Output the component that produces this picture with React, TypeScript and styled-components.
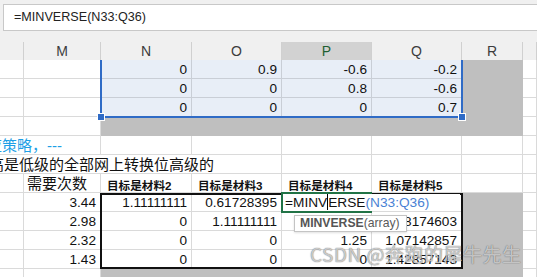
import React from 'react';
import styled, { createGlobalStyle, css } from 'styled-components';

const GlobalStyle = createGlobalStyle`
  html, body {
    margin: 0;
    padding: 0;
    background: #fff;
  }
  body {
    font-family: "Liberation Sans", "Noto Sans CJK SC", sans-serif;
  }
`;

const COLS = [24, 77, 91, 90, 90, 90, 61, 14];
const LETTERS = ['', 'M', 'N', 'O', 'P', 'Q', 'R', ''];
const colTemplate = COLS.map(c => c + 'px').join(' ');

type Fill = 'sel' | 'grey';
type Kind = 'num' | 'note' | 'text' | 'label' | 'title';
type C = { v?: string; fill?: Fill; span?: number; kind?: Kind };

const e: C = {};
const s = (v: string): C => ({ v, fill: 'sel' });
const g: C = { fill: 'grey' };
const n = (v: string): C => ({ v });
const t = (v: string): C => ({ v, kind: 'title' });

const ROWS: C[][] = [
  [e, e, s('0'), s('0.9'), s('-0.6'), s('-0.2'), g, e],
  [e, e, s('0'), s('0'), s('0.8'), s('-0.6'), g, e],
  [e, e, s('0'), s('0'), s('0'), s('0.7'), g, e],
  [e, e, g, g, g, g, g, e],
  [{ v: '应策略，---', kind: 'note', span: 2 }, e, e, e, e, e, e],
  [{ v: '高是低级的全部网上转换位高级的', kind: 'text', span: 4 }, e, e, e, e],
  [e, { v: '需要次数', kind: 'label' }, t('目标是材料2'), t('目标是材料3'), t('目标是材料4'), t('目标是材料5'), e, e],
  [e, n('3.44'), n('1.11111111'), n('0.61728395'), e, e, g, e],
  [e, n('2.98'), n('0'), n('1.11111111'), n('0'), n('0.38174603'), g, e],
  [e, n('2.32'), n('0'), n('0'), n('1.25'), n('1.07142857'), g, e],
  [e, n('1.43'), n('0'), n('0'), n('0'), n('1.42857143'), g, e],
  [e, e, g, g, g, g, g, e],
];

const Window = styled.div`
  width: 537px;
  height: 277px;
  overflow: hidden;
  background: #f0f0f0;
  display: flex;
  flex-direction: column;
`;

const FormulaArea = styled.div`
  height: 42px;
  flex: none;
  box-sizing: border-box;
  padding: 4px 0 0 3px;
`;

const FormulaInput = styled.div`
  height: 27px;
  box-sizing: border-box;
  background: #fff;
  border: 1px solid #c8c8c8;
  border-right: none;
  padding-left: 10px;
  font-size: 12.6px;
  line-height: 25px;
  color: #222;
`;

const HeaderRow = styled.div`
  display: grid;
  grid-template-columns: ${colTemplate};
  height: 18px;
  flex: none;
`;

const ColHead = styled.div<{ $active?: boolean }>`
  box-sizing: border-box;
  border-right: 1px solid #d0d0d0;
  border-bottom: 1px solid #bdbdbd;
  text-align: center;
  font-size: 14px;
  line-height: 18px;
  color: #3c3c3c;
  ${p => p.$active && css`
    background: #d2d2d2;
    border-bottom: 2px solid #217346;
    color: #1f5f30;
  `}
`;

const Body = styled.div`
  position: relative;
  flex: none;
  background: #fff;
  display: grid;
  grid-template-columns: ${colTemplate};
  grid-auto-rows: 19px;
`;

const Cell = styled.div<{ $fill?: Fill; $span?: number; $kind?: Kind }>`
  box-sizing: border-box;
  grid-column: span ${p => p.$span || 1};
  border-right: 1px solid #dadada;
  border-bottom: 1px solid #dadada;
  overflow: hidden;
  white-space: nowrap;
  padding: 1px 4px 0 3px;
  font-size: 13.6px;
  line-height: 18px;
  text-align: right;
  color: #111;
  ${p => p.$fill === 'sel' && css`
    background: #e8eef7;
    border-color: #c9ced6;
  `}
  ${p => p.$fill === 'grey' && css`
    background: #bfbfbf;
    border-color: #bfbfbf;
  `}
  ${p => (p.$kind === 'note' || p.$kind === 'text') && css`
    text-align: left;
    padding: 0;
    font-size: 15px;
    line-height: 19px;
    text-indent: ${p.$kind === 'note' ? -13 : -11}px;
    color: ${p.$kind === 'note' ? '#1e9fe6' : '#111'};
  `}
  ${p => p.$kind === 'label' && css`
    text-align: left;
    padding: 1px 0 0 3px;
    font-size: 15px;
  `}
  ${p => p.$kind === 'title' && css`
    text-align: left;
    padding: 3px 0 0 6px;
    font-size: 11.6px;
    font-weight: 700;
  `}
`;

const RefRange = styled.div`
  position: absolute;
  left: 100px;
  top: 0;
  width: 363px;
  height: 58px;
  box-sizing: border-box;
  border: 2px solid #2f6bc6;
  border-top: none;
  pointer-events: none;
`;

const Handle = styled.div<{ $side: 'left' | 'right' }>`
  position: absolute;
  bottom: -5px;
  ${p => (p.$side === 'left' ? 'left: -5px;' : 'right: -5px;')}
  width: 6px;
  height: 6px;
  background: #2f6bc6;
  border: 1px solid #fff;
`;

const BlockBorder = styled.div`
  position: absolute;
  left: 100px;
  top: 133px;
  width: 363px;
  height: 76px;
  box-sizing: border-box;
  border: 2px solid #111;
  pointer-events: none;
`;

/* active cell P: green frame, the editor text spills out over Q */
const ActiveFrame = styled.div`
  position: absolute;
  left: 281px;
  top: 132px;
  width: 91px;
  height: 21px;
  box-sizing: border-box;
  border: 2px solid #217346;
`;

const EditorText = styled.div`
  width: 177px;
  height: 17px;
  background: #fff;
  font-size: 13.7px;
  line-height: 17px;
  padding-left: 2px;
  box-sizing: border-box;
  white-space: nowrap;
  color: #111;
`;

const RefText = styled.span`
  color: #4a82d4;
`;

const Caret = styled.span`
  display: inline-block;
  width: 0;
  height: 16px;
  border-left: 1px solid #000;
  vertical-align: -3px;
`;

const Tip = styled.div`
  position: absolute;
  left: 294px;
  top: 155px;
  width: 113px;
  height: 17px;
  box-sizing: border-box;
  background: #fff;
  border: 1px solid #c4c4c4;
  box-shadow: 0 1px 2px rgba(0, 0, 0, 0.12);
  padding-left: 5px;
  font-size: 12.2px;
  line-height: 15px;
  color: #5a5a5a;
  white-space: nowrap;
`;

const TipName = styled.b`
  color: #555;
`;

const Watermark = styled.div`
  position: absolute;
  left: 310px;
  top: 180px;
  font-family: "Noto Sans CJK SC", sans-serif;
  font-size: 19px;
  letter-spacing: 0.5px;
  line-height: 28px;
  white-space: nowrap;
  color: rgba(240, 240, 240, 0.7);
  text-shadow: 0 0 1px rgba(70, 70, 70, 0.7), 0 0 1px rgba(70, 70, 70, 0.4);
  pointer-events: none;
`;

export default function App() {
  return (
    <>
      <GlobalStyle />
      <Window>
        <FormulaArea>
          <FormulaInput>=MINVERSE(N33:Q36)</FormulaInput>
        </FormulaArea>
        <HeaderRow>
          {LETTERS.map((l, i) => (
            <ColHead key={i} $active={l === 'P'}>{l}</ColHead>
          ))}
        </HeaderRow>
        <Body>
          {ROWS.map((row, r) =>
            row.map((c, i) => (
              <Cell key={r + '-' + i} $fill={c.fill} $span={c.span} $kind={c.kind}>
                {c.v}
              </Cell>
            ))
          )}
          <RefRange>
            <Handle $side="left" />
            <Handle $side="right" />
          </RefRange>
          <BlockBorder />
          <ActiveFrame>
            <EditorText>
              =MINV<Caret />ERSE<RefText>(N33:Q36)</RefText>
            </EditorText>
          </ActiveFrame>
          <Tip>
            <TipName>MINVERSE</TipName>(array)
          </Tip>
          <Watermark>CSDN @奔跑的犀牛先生</Watermark>
        </Body>
      </Window>
    </>
  );
}
